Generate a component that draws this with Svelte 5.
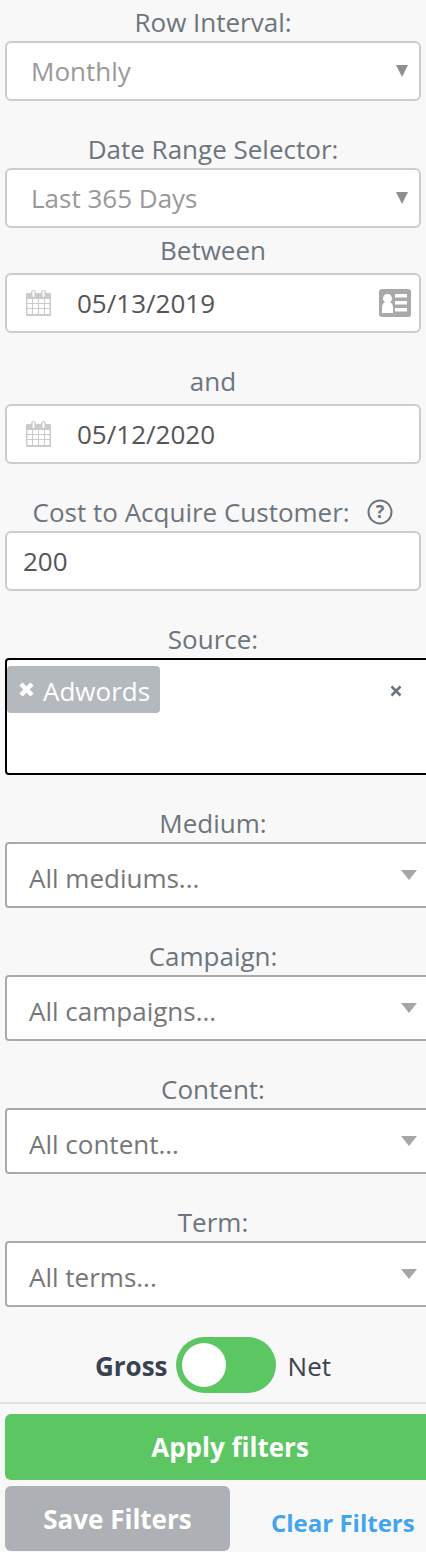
<script>
  const dropdowns = [
    { label: 'Medium:', placeholder: 'All mediums...' },
    { label: 'Campaign:', placeholder: 'All campaigns...' },
    { label: 'Content:', placeholder: 'All content...' },
    { label: 'Term:', placeholder: 'All terms...' }
  ];
</script>

{#snippet calendar()}
  <svg class="calendar" width="25" height="26" viewBox="0 0 25 26">
    <path
      fill="#c9cbcd"
      fill-rule="evenodd"
      d="M1 3h4V2.500a2.500 2.500 0 0 1 5 0V3h5v-.5a2.500 2.500 0 0 1 5 0V3h4a1 1 0 0 1 1 1v21a1 1 0 0 1-1 1H1a1 1 0 0 1-1-1V4a1 1 0 0 1 1-1zM6.500 2v4a1 1 0 0 0 2 0V2a1 1 0 0 0-2 0zM16.500 2v4a1 1 0 0 0 2 0V2a1 1 0 0 0-2 0zM1.500 9v4h4.500V9zM7 9v4h5V9zM13 9v4h5V9zM19 9v4h4.500V9zM1.500 14v4h4.500v-4zM7 14v4h5v-4zM13 14v4h5v-4zM19 14v4h4.500v-4zM1.500 19v5h4.500v-5zM7 19v5h5v-5zM13 19v5h5v-5zM19 19v5h4.500v-5z"
    />
  </svg>
{/snippet}

<div class="panel">
  <div class="field">
    <div class="label">Row Interval:</div>
    <div class="box plain-select">
      <span>Monthly</span>
      <span class="small-arrow"></span>
    </div>
  </div>

  <div class="field tight">
    <div class="label">Date Range Selector:</div>
    <div class="box plain-select">
      <span>Last 365 Days</span>
      <span class="small-arrow"></span>
    </div>
  </div>

  <div class="field date-field">
    <div class="label">Between</div>
    <div class="box date">
      {@render calendar()}
      <span>05/13/2019</span>
      <svg class="card" width="32" height="28" viewBox="0 0 32 28">
        <path
          fill="#a9a9a9"
          fill-rule="evenodd"
          d="M3 0h26a3 3 0 0 1 3 3v22a3 3 0 0 1-3 3H3a3 3 0 0 1-3-3V3a3 3 0 0 1 3-3zM8.500 5a4.500 4.500 0 0 0-2.500 8.200C4 14 3 16 3 19v5h11v-5c0-3-1-5-3-5.800A4.500 4.500 0 0 0 8.500 5zM16 5v3.500h12V5zM16 12v3.500h12V12zM16 19v3.500h12V19z"
        />
      </svg>
    </div>
  </div>

  <div class="field date-field">
    <div class="label">and</div>
    <div class="box date">
      {@render calendar()}
      <span>05/12/2020</span>
    </div>
  </div>

  <div class="field">
    <div class="label">
      Cost to Acquire Customer:
      <svg class="help" width="26" height="26" viewBox="0 0 26 26">
        <circle cx="13" cy="13" r="11.500" fill="none" stroke="#6c757d" stroke-width="2" />
        <text x="13" y="19" text-anchor="middle">?</text>
      </svg>
    </div>
    <div class="box cost">200</div>
  </div>

  <div class="field">
    <div class="label">Source:</div>
    <div class="source">
      <span class="tag">
        <svg class="tag-x" width="15" height="15" viewBox="0 0 15 15">
          <path d="M2 2l11 11M13 2L2 13" stroke="#fff" stroke-width="4.500" />
        </svg>
        <span class="tag-text">Adwords</span>
      </span>
      <svg class="clear" width="12" height="12" viewBox="0 0 12 12">
        <path d="M1.500 1.500l9 9M10.500 1.500l-9 9" stroke="#6c757d" stroke-width="2.600" />
      </svg>
    </div>
  </div>

  {#each dropdowns as item}
    <div class="field">
      <div class="label">{item.label}</div>
      <div class="dropdown">
        <span>{item.placeholder}</span>
        <span class="big-arrow"></span>
      </div>
    </div>
  {/each}

  <div class="toggle-row">
    <span class="gross">Gross</span>
    <span class="toggle"><span class="knob"></span></span>
    <span class="net">Net</span>
  </div>

  <div class="actions">
    <button class="apply">Apply filters</button>
    <div class="secondary">
      <button class="save">Save Filters</button>
      <a class="reset" href="#clear">Clear Filters</a>
    </div>
  </div>
</div>

<style>
  :global(body) {
    margin: 0;
    background: #f8f8f8;
  }

  .panel {
    width: 426px;
    height: 1552px;
    overflow: hidden;
    padding-top: 5px;
    box-sizing: border-box;
    background: #f8f8f8;
    font-family: 'Open Sans', sans-serif;
    font-size: 26px;
    color: #6c757d;
  }

  .field {
    margin-bottom: 31px;
  }

  .field.tight {
    margin-bottom: 4px;
  }

  .date-field {
    margin-bottom: 30px;
  }

  .date-field + .date-field {
    margin-bottom: 31px;
  }

  .label {
    height: 36px;
    line-height: 34px;
    text-align: center;
    white-space: nowrap;
  }

  .date-field .label {
    height: 41px;
    line-height: 36px;
  }

  .box {
    display: flex;
    align-items: center;
    box-sizing: border-box;
    width: 416px;
    height: 60px;
    margin-left: 5px;
    background: #fff;
    border: 2px solid #ccc;
    border-radius: 6px;
  }

  .plain-select {
    justify-content: space-between;
    padding: 0 11px 0 24px;
    color: #999;
  }

  .small-arrow {
    width: 0;
    height: 0;
    border-left: 6px solid transparent;
    border-right: 6px solid transparent;
    border-top: 12px solid #8f8f8f;
  }

  .date {
    padding: 0 8px 0 19px;
    color: #555;
  }

  .calendar {
    flex: none;
    margin-right: 26px;
  }

  .card {
    margin-left: auto;
  }

  .cost {
    padding-left: 16px;
    color: #555;
  }

  .help {
    margin-left: 11px;
    vertical-align: -3px;
  }

  .help text {
    font-family: 'Open Sans', sans-serif;
    font-size: 18px;
    font-weight: 700;
    fill: #6c757d;
  }

  .source {
    position: relative;
    box-sizing: border-box;
    width: 430px;
    height: 117px;
    margin-left: 5px;
    padding: 6px 0 0;
    background: #fff;
    border: 2px solid #000;
    border-radius: 4px;
  }

  .tag {
    display: flex;
    align-items: center;
    width: 153px;
    height: 47px;
    box-sizing: border-box;
    padding-left: 12px;
    color: #fff;
    background: #b4b9be;
    border-radius: 4px;
    white-space: nowrap;
  }

  .tag-x {
    margin-right: 9px;
  }

  .tag-text {
    padding-top: 2px;
  }

  .clear {
    position: absolute;
    left: 383px;
    top: 25px;
  }

  .dropdown {
    display: flex;
    align-items: center;
    justify-content: space-between;
    box-sizing: border-box;
    width: 430px;
    height: 66px;
    margin-left: 5px;
    padding: 6px 14px 0 22px;
    color: #777;
    background: #fff;
    border: 2px solid #aaa;
    border-radius: 4px;
  }

  .big-arrow {
    position: relative;
    left: -2px;
    width: 0;
    height: 0;
    margin-bottom: 6px;
    border-left: 8px solid transparent;
    border-right: 8px solid transparent;
    border-top: 10px solid #a6a6a6;
  }

  .toggle-row {
    display: flex;
    align-items: center;
    justify-content: center;
    height: 56px;
    margin-top: -1px;
    color: #3a4250;
  }

  .gross {
    margin: 2px 8px 0 0;
    font-weight: 700;
  }

  .toggle {
    display: block;
    box-sizing: border-box;
    width: 100px;
    height: 56px;
    padding: 6px;
    background: #5cc663;
    border-radius: 28px;
  }

  .knob {
    display: block;
    width: 44px;
    height: 44px;
    background: #fff;
    border-radius: 50%;
  }

  .net {
    margin: 2px 0 0 12px;
  }

  .actions {
    margin-top: 9px;
    padding: 10px 0 0 5px;
    border-top: 2px solid #e2e2e2;
  }

  button {
    display: block;
    box-sizing: border-box;
    height: 66px;
    border: 0;
    border-radius: 6px;
    color: #fff;
    font-family: inherit;
    font-size: 26px;
    font-weight: 700;
  }

  .apply {
    width: 450px;
    background: #5cc663;
  }

  .secondary {
    display: flex;
    align-items: center;
    margin-top: 6px;
  }

  .save {
    width: 225px;
    height: 65px;
    background: #adb0b4;
  }

  .reset {
    margin: 8px 0 0 41px;
    color: #42a5f0;
    font-size: 24px;
    font-weight: 700;
    text-decoration: none;
    white-space: nowrap;
  }
</style>
